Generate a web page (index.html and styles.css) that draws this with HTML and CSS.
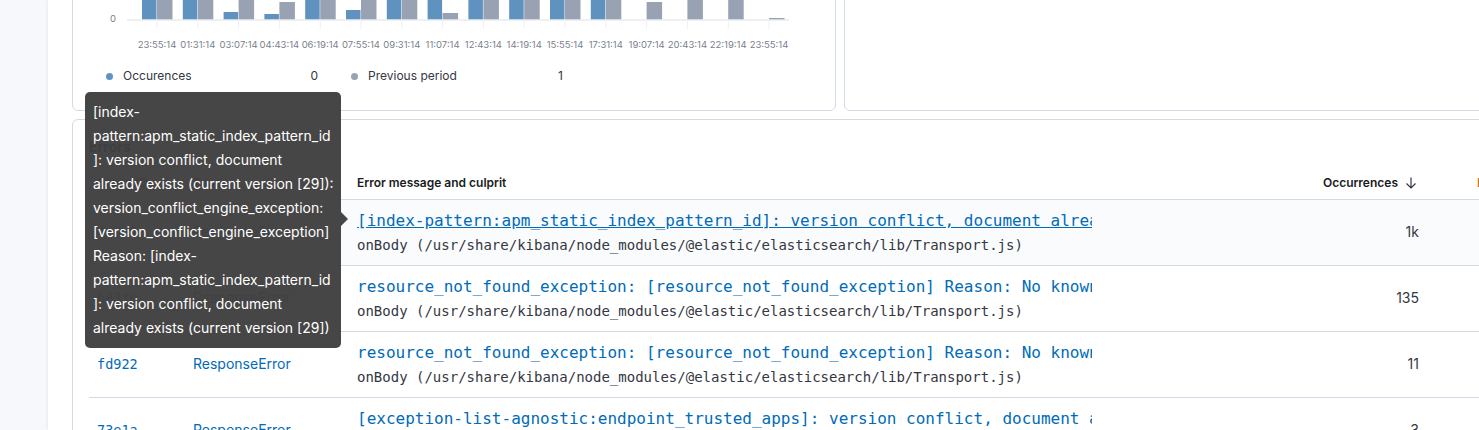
FILE: index.html
```html
<!DOCTYPE html>
<html lang="en">
  <head>
    <title>Errors</title>
    <link rel="stylesheet" href="styles.css">
  </head>
  <body>
    <div class="sidebar"></div>

    <div class="main">
      <div class="top-row">
        <div class="panel chart-panel">
          <svg class="chart" width="730" height="80" viewBox="0 0 730 80">
            <text class="axis-label" x="27" y="41.5" text-anchor="end">0</text>

            <g class="bars">
              <rect class="bar-current" x="53" y="0" width="14.5" height="40" />
              <rect class="bar-previous" x="68" y="0" width="15.5" height="40" />
              <rect class="bar-current" x="93.8" y="0" width="14.5" height="40" />
              <rect class="bar-previous" x="108.8" y="0" width="15.5" height="40" />
              <rect class="bar-current" x="134.6" y="32" width="14.5" height="8" />
              <rect class="bar-previous" x="149.6" y="0" width="15.5" height="40" />
              <rect class="bar-current" x="175.4" y="34" width="14.5" height="6" />
              <rect class="bar-previous" x="190.4" y="22" width="15.5" height="18" />
              <rect class="bar-current" x="216.2" y="0" width="14.5" height="40" />
              <rect class="bar-previous" x="231.2" y="0" width="15.5" height="40" />
              <rect class="bar-current" x="257" y="30" width="14.5" height="10" />
              <rect class="bar-previous" x="272" y="0" width="15.5" height="40" />
              <rect class="bar-current" x="297.8" y="0" width="14.5" height="40" />
              <rect class="bar-previous" x="312.8" y="0" width="15.5" height="40" />
              <rect class="bar-current" x="338.6" y="0" width="14.5" height="40" />
              <rect class="bar-previous" x="353.6" y="33" width="15.5" height="7" />
              <rect class="bar-current" x="379.4" y="0" width="14.5" height="40" />
              <rect class="bar-previous" x="394.4" y="0" width="15.5" height="40" />
              <rect class="bar-current" x="420.2" y="0" width="14.5" height="40" />
              <rect class="bar-previous" x="435.2" y="0" width="15.5" height="40" />
              <rect class="bar-current" x="461" y="0" width="14.5" height="40" />
              <rect class="bar-previous" x="476" y="0" width="15.5" height="40" />
              <rect class="bar-current" x="501.8" y="0" width="14.5" height="40" />
              <rect class="bar-previous" x="516.8" y="0" width="15.5" height="40" />
              <rect class="bar-previous" x="557.6" y="22" width="15.5" height="18" />
              <rect class="bar-previous" x="598.4" y="0" width="15.5" height="40" />
              <rect class="bar-previous" x="639.2" y="0" width="15.5" height="40" />
              <rect class="bar-previous" x="680" y="38" width="15.5" height="2" />
            </g>

            <line class="axis-line" x1="38" y1="40" x2="700" y2="40" />

            <g class="ticks">
              <line x1="68" y1="40" x2="68" y2="49" />
              <line x1="108.8" y1="40" x2="108.8" y2="49" />
              <line x1="149.6" y1="40" x2="149.6" y2="49" />
              <line x1="190.4" y1="40" x2="190.4" y2="49" />
              <line x1="231.2" y1="40" x2="231.2" y2="49" />
              <line x1="272" y1="40" x2="272" y2="49" />
              <line x1="312.8" y1="40" x2="312.8" y2="49" />
              <line x1="353.6" y1="40" x2="353.6" y2="49" />
              <line x1="394.4" y1="40" x2="394.4" y2="49" />
              <line x1="435.2" y1="40" x2="435.2" y2="49" />
              <line x1="476" y1="40" x2="476" y2="49" />
              <line x1="516.8" y1="40" x2="516.8" y2="49" />
              <line x1="557.6" y1="40" x2="557.6" y2="49" />
              <line x1="598.4" y1="40" x2="598.4" y2="49" />
              <line x1="639.2" y1="40" x2="639.2" y2="49" />
              <line x1="680" y1="40" x2="680" y2="49" />
            </g>

            <g class="tick-labels" text-anchor="middle">
              <text x="68" y="67.5">23:55:14</text>
              <text x="108.8" y="67.5">01:31:14</text>
              <text x="149.6" y="67.5">03:07:14</text>
              <text x="190.4" y="67.5">04:43:14</text>
              <text x="231.2" y="67.5">06:19:14</text>
              <text x="272" y="67.5">07:55:14</text>
              <text x="312.8" y="67.5">09:31:14</text>
              <text x="353.6" y="67.5">11:07:14</text>
              <text x="394.4" y="67.5">12:43:14</text>
              <text x="435.2" y="67.5">14:19:14</text>
              <text x="476" y="67.5">15:55:14</text>
              <text x="516.8" y="67.5">17:31:14</text>
              <text x="557.6" y="67.5">19:07:14</text>
              <text x="598.4" y="67.5">20:43:14</text>
              <text x="639.2" y="67.5">22:19:14</text>
              <text x="680" y="67.5">23:55:14</text>
            </g>
          </svg>

          <div class="legend">
            <div class="legend-item">
              <span class="dot dot-current"></span>
              <span class="legend-label">Occurences</span>
              <span class="legend-value">0</span>
            </div>
            <div class="legend-item">
              <span class="dot dot-previous"></span>
              <span class="legend-label">Previous period</span>
              <span class="legend-value">1</span>
            </div>
          </div>
        </div>

        <div class="panel side-panel"></div>
      </div>

      <div class="panel errors-panel">
        <h3 class="panel-title">Errors</h3>
        <table class="errors-table">
          <colgroup>
            <col class="col-id">
            <col class="col-type">
            <col class="col-message">
            <col class="col-count">
            <col class="col-last">
          </colgroup>
          <thead>
            <tr>
              <th>Group ID</th>
              <th>Type</th>
              <th>Error message and culprit</th>
              <th class="num">
                Occurrences
                <svg class="sort-icon" width="16" height="16" viewBox="0 0 16 16">
                  <path d="M8 2.5v10M3.5 8.5L8 13l4.5-4.5" />
                </svg>
              </th>
              <th class="last-seen">Last seen</th>
            </tr>
          </thead>
          <tbody>
            <tr class="hovered">
              <td class="mid"><a class="group-id">4d6e1</a></td>
              <td class="mid"><a class="type-link">ResponseError</a></td>
              <td>
                <a class="message underline">[index-pattern:apm_static_index_pattern_id]: version conflict, document already exists (current version [29]): version_conflict_engine_exception</a>
                <div class="culprit">onBody (/usr/share/kibana/node_modules/@elastic/elasticsearch/lib/Transport.js)</div>
              </td>
              <td class="mid num">1k</td>
              <td></td>
            </tr>
            <tr>
              <td class="mid"><a class="group-id">b83f0</a></td>
              <td class="mid"><a class="type-link">ResponseError</a></td>
              <td>
                <a class="message">resource_not_found_exception: [resource_not_found_exception] Reason: No known master node, scheduling a retry</a>
                <div class="culprit">onBody (/usr/share/kibana/node_modules/@elastic/elasticsearch/lib/Transport.js)</div>
              </td>
              <td class="mid num">135</td>
              <td></td>
            </tr>
            <tr>
              <td class="mid"><a class="group-id">fd922</a></td>
              <td class="mid"><a class="type-link">ResponseError</a></td>
              <td>
                <a class="message">resource_not_found_exception: [resource_not_found_exception] Reason: No known master node, scheduling a retry</a>
                <div class="culprit">onBody (/usr/share/kibana/node_modules/@elastic/elasticsearch/lib/Transport.js)</div>
              </td>
              <td class="mid num">11</td>
              <td></td>
            </tr>
            <tr>
              <td class="mid"><a class="group-id">73e1a</a></td>
              <td class="mid"><a class="type-link">ResponseError</a></td>
              <td>
                <a class="message">[exception-list-agnostic:endpoint_trusted_apps]: version conflict, document already exists (current version [1])</a>
                <div class="culprit">onBody (/usr/share/kibana/node_modules/@elastic/elasticsearch/lib/Transport.js)</div>
              </td>
              <td class="mid num">3</td>
              <td></td>
            </tr>
          </tbody>
        </table>
      </div>
    </div>

    <div class="tooltip">
      [index-pattern:apm_static_index_pattern_id]: version conflict, document already exists (current version [29]): version_conflict_engine_exception: [version_conflict_engine_exception] Reason: [index-pattern:apm_static_index_pattern_id]: version conflict, document already exists (current version [29])
    </div>
  </body>
</html>
```

FILE: styles.css
```css
body {
  margin: 0;
  display: flex;
  height: 100vh;
  overflow: hidden;
  font-family: Inter, "Liberation Sans", sans-serif;
  color: #343741;
  background-color: #f7f8fc;
}

.sidebar {
  flex: none;
  width: 48px;
  background-color: #f7f8fc;
}

.main {
  flex: none;
  width: 1540px;
  display: flex;
  flex-direction: column;
  gap: 8px;
  padding-left: 24px;
  background: white;
  box-shadow: -1px 0 3px rgba(0, 0, 0, 0.06);
}

.top-row {
  display: flex;
  gap: 8px;
  margin-top: -37px;
}

.panel {
  background: white;
  border: 1px solid #d3dae6;
  border-radius: 6px;
}

.chart-panel {
  flex: none;
  width: 730px;
  padding: 16px 16px 24px;
}

.side-panel {
  flex: 1;
}

.chart {
  display: block;
  overflow: visible;
}

.bar-current {
  fill: #6092c0;
}

.bar-previous {
  fill: #98a2b3;
}

.axis-line {
  stroke: #e9ecf1;
  stroke-width: 1.5;
}

.ticks line {
  stroke: #eef0f3;
  stroke-width: 1;
}

.axis-label,
.tick-labels text {
  font-family: Inter, "Liberation Sans", sans-serif;
  font-size: 9.5px;
  fill: #7b818c;
}

.legend {
  display: flex;
  gap: 33px;
  margin-top: 6px;
  padding-left: 17px;
  font-size: 12px;
  line-height: 20px;
  color: #343741;
}

.legend-item {
  display: flex;
  align-items: center;
  width: 212px;
}

.dot {
  width: 7px;
  height: 7px;
  border-radius: 50%;
  margin-right: 10px;
}

.dot-current {
  background-color: #6092c0;
}

.dot-previous {
  background-color: #98a2b3;
}

.legend-value {
  margin-left: auto;
}

.errors-panel {
  padding: 16px;
}

.panel-title {
  margin: 0 0 9px;
  font-size: 14px;
  font-weight: 700;
  line-height: 22px;
  color: #1a1c21;
}

.errors-table {
  table-layout: fixed;
  border-collapse: collapse;
  width: 1450px;
}

.col-id {
  width: 96px;
}

.col-type {
  width: 164px;
}

.col-message {
  width: 751px;
}

.col-count {
  width: 327px;
}

.errors-table th {
  padding: 8px;
  font-size: 12px;
  font-weight: 600;
  line-height: 16px;
  color: #1a1c21;
  text-align: left;
  white-space: nowrap;
  border-bottom: 1px solid #d3dae6;
}

.errors-table th.num {
  text-align: right;
}

.errors-table th.last-seen {
  padding-left: 50px;
  color: #c17b28;
}

.sort-icon {
  vertical-align: -4px;
  margin-left: 2px;
  fill: none;
  stroke: #343741;
  stroke-width: 1.2;
}

.errors-table td {
  padding: 9px 8px 8px;
  vertical-align: middle;
  border-bottom: 1px solid #d3dae6;
  font-size: 14px;
}

.errors-table td.mid {
  padding: 7px 8px 10px;
}

.errors-table td.num {
  text-align: right;
  color: #343741;
}

.errors-table tr.hovered td {
  background-color: #fafbfd;
}

.group-id {
  font-family: "DejaVu Sans Mono", "Liberation Mono", monospace;
  font-size: 13.5px;
  color: #006bb8;
}

.type-link {
  color: #006bb8;
}

.message {
  display: block;
  overflow: hidden;
  white-space: nowrap;
  font-family: "DejaVu Sans Mono", "Liberation Mono", monospace;
  font-size: 16px;
  line-height: 24px;
  color: #006bb8;
}

.message.underline {
  text-decoration: underline;
}

.culprit {
  overflow: hidden;
  white-space: nowrap;
  font-family: "DejaVu Sans Mono", "Liberation Mono", monospace;
  font-size: 14px;
  line-height: 24px;
  color: #343741;
}

.tooltip {
  position: absolute;
  left: 85px;
  top: 92px;
  width: 242px;
  padding: 8px 6px 8px 8px;
  border-radius: 5px;
  background-color: rgba(64, 64, 64, 0.97);
  color: white;
  font-size: 14px;
  line-height: 24px;
  overflow-wrap: break-word;
}

.tooltip::after {
  content: "";
  position: absolute;
  left: 100%;
  top: 120px;
  border-left: 7px solid rgba(64, 64, 64, 0.97);
  border-top: 7px solid transparent;
  border-bottom: 7px solid transparent;
}
```
